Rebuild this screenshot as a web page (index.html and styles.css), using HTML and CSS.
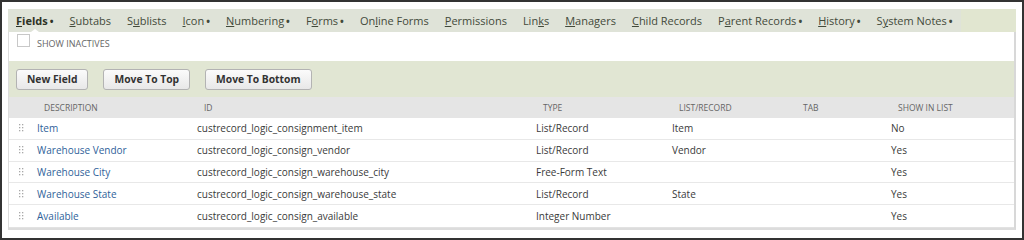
FILE: index.html
```html
<!DOCTYPE html>
<html>
<head>
<meta charset="utf-8">
<link rel="stylesheet" href="styles.css">
</head>
<body>
<div class="frame">
  <div class="panel">
    <div class="tabbar">
      <ul class="tabs">
        <li class="tab selected"><span><u>F</u>ields</span><span class="dot">•</span></li>
        <li class="tab"><span><u>S</u>ubtabs</span></li>
        <li class="tab"><span>S<u>u</u>blists</span></li>
        <li class="tab"><span><u>I</u>con</span><span class="dot">•</span></li>
        <li class="tab"><span><u>N</u>umbering</span><span class="dot">•</span></li>
        <li class="tab"><span>F<u>o</u>rms</span><span class="dot">•</span></li>
        <li class="tab"><span>On<u>l</u>ine Forms</span></li>
        <li class="tab"><span><u>P</u>ermissions</span></li>
        <li class="tab"><span>Lin<u>k</u>s</span></li>
        <li class="tab"><span><u>M</u>anagers</span></li>
        <li class="tab"><span><u>C</u>hild Records</span></li>
        <li class="tab"><span>P<u>a</u>rent Records</span><span class="dot">•</span></li>
        <li class="tab"><span><u>H</u>istory</span><span class="dot">•</span></li>
        <li class="tab"><span>S<u>y</u>stem Notes</span><span class="dot">•</span></li>
      </ul>
    </div>
    <div class="content">
      <div class="inactives">
        <span class="checkbox"></span>
        <span class="inactives-label">SHOW INACTIVES</span>
      </div>
      <div class="buttonbar">
        <button class="btn">New Field</button>
        <button class="btn">Move To Top</button>
        <button class="btn">Move To Bottom</button>
      </div>
      <div class="table">
        <div class="row head">
          <div class="cell"></div>
          <div class="cell">DESCRIPTION</div>
          <div class="cell">ID</div>
          <div class="cell">TYPE</div>
          <div class="cell">LIST/RECORD</div>
          <div class="cell">TAB</div>
          <div class="cell">SHOW IN LIST</div>
        </div>
        <div class="row">
          <div class="cell handle"><svg width="5" height="8" viewBox="0 0 5 8"><g fill="#a8a8a8"><rect x="0" y="0" width="1.3" height="1.3"/><rect x="3" y="0" width="1.3" height="1.3"/><rect x="0" y="3" width="1.3" height="1.3"/><rect x="3" y="3" width="1.3" height="1.3"/><rect x="0" y="6" width="1.3" height="1.3"/><rect x="3" y="6" width="1.3" height="1.3"/></g></svg></div>
          <div class="cell link">Item</div>
          <div class="cell">custrecord_logic_consignment_item</div>
          <div class="cell">List/Record</div>
          <div class="cell">Item</div>
          <div class="cell"></div>
          <div class="cell">No</div>
        </div>
        <div class="row">
          <div class="cell handle"><svg width="5" height="8" viewBox="0 0 5 8"><g fill="#a8a8a8"><rect x="0" y="0" width="1.3" height="1.3"/><rect x="3" y="0" width="1.3" height="1.3"/><rect x="0" y="3" width="1.3" height="1.3"/><rect x="3" y="3" width="1.3" height="1.3"/><rect x="0" y="6" width="1.3" height="1.3"/><rect x="3" y="6" width="1.3" height="1.3"/></g></svg></div>
          <div class="cell link">Warehouse Vendor</div>
          <div class="cell">custrecord_logic_consign_vendor</div>
          <div class="cell">List/Record</div>
          <div class="cell">Vendor</div>
          <div class="cell"></div>
          <div class="cell">Yes</div>
        </div>
        <div class="row">
          <div class="cell handle"><svg width="5" height="8" viewBox="0 0 5 8"><g fill="#a8a8a8"><rect x="0" y="0" width="1.3" height="1.3"/><rect x="3" y="0" width="1.3" height="1.3"/><rect x="0" y="3" width="1.3" height="1.3"/><rect x="3" y="3" width="1.3" height="1.3"/><rect x="0" y="6" width="1.3" height="1.3"/><rect x="3" y="6" width="1.3" height="1.3"/></g></svg></div>
          <div class="cell link">Warehouse City</div>
          <div class="cell">custrecord_logic_consign_warehouse_city</div>
          <div class="cell">Free-Form Text</div>
          <div class="cell"></div>
          <div class="cell"></div>
          <div class="cell">Yes</div>
        </div>
        <div class="row">
          <div class="cell handle"><svg width="5" height="8" viewBox="0 0 5 8"><g fill="#a8a8a8"><rect x="0" y="0" width="1.3" height="1.3"/><rect x="3" y="0" width="1.3" height="1.3"/><rect x="0" y="3" width="1.3" height="1.3"/><rect x="3" y="3" width="1.3" height="1.3"/><rect x="0" y="6" width="1.3" height="1.3"/><rect x="3" y="6" width="1.3" height="1.3"/></g></svg></div>
          <div class="cell link">Warehouse State</div>
          <div class="cell">custrecord_logic_consign_warehouse_state</div>
          <div class="cell">List/Record</div>
          <div class="cell">State</div>
          <div class="cell"></div>
          <div class="cell">Yes</div>
        </div>
        <div class="row last">
          <div class="cell handle"><svg width="5" height="8" viewBox="0 0 5 8"><g fill="#a8a8a8"><rect x="0" y="0" width="1.3" height="1.3"/><rect x="3" y="0" width="1.3" height="1.3"/><rect x="0" y="3" width="1.3" height="1.3"/><rect x="3" y="3" width="1.3" height="1.3"/><rect x="0" y="6" width="1.3" height="1.3"/><rect x="3" y="6" width="1.3" height="1.3"/></g></svg></div>
          <div class="cell link">Available</div>
          <div class="cell">custrecord_logic_consign_available</div>
          <div class="cell">Integer Number</div>
          <div class="cell"></div>
          <div class="cell"></div>
          <div class="cell">Yes</div>
        </div>
      </div>
    </div>
  </div>
</div>
</body>
</html>
```

FILE: styles.css
```css
* { box-sizing: border-box; }
html, body { margin: 0; padding: 0; background: #fff; }
body { font-family: "Open Sans", "Liberation Sans", sans-serif; color: #333; }

.frame {
  width: 1024px;
  height: 240px;
  border: 2px solid #333;
  padding: 7px 6px 0 6px;
  overflow: hidden;
}

.panel { width: 1008px; }

.tabbar {
  height: 23px;
  background: #e1e6d0;
  display: flex;
}
.tabs {
  list-style: none;
  margin: 0;
  padding: 0;
  display: flex;
  background: #dfe3d8;
  height: 23px;
}
.tab {
  position: relative;
  padding: 0 8px;
  font-size: 11px;
  line-height: 23px;
  color: #434a3a;
  white-space: nowrap;
}
.tab u { text-decoration-thickness: 1px; text-underline-offset: 1px; }
.tab.selected { font-weight: 700; color: #2e3326; }
.tab.selected::after {
  content: "";
  position: absolute;
  left: 50%;
  bottom: 0;
  margin-left: -4px;
  border-left: 4px solid transparent;
  border-right: 4px solid transparent;
  border-bottom: 3px solid #fff;
}
.dot { font-size: 10px; margin-left: 2px; font-weight: 700; }

.content {
  border-left: 1px solid #dcdcdc;
  border-right: 2px solid #d8d8d8;
  border-bottom: 2px solid #dcdcdc;
}

.inactives {
  height: 29px;
  display: flex;
  align-items: flex-start;
  padding: 2px 0 0 8px;
}
.checkbox {
  width: 13px;
  height: 13px;
  border: 1px solid #c8c8c8;
  background: #fff;
  display: inline-block;
}
.inactives-label {
  font-size: 9px;
  color: #666;
  margin-left: 7px;
  margin-top: 4px;
  line-height: 12px;
}

.buttonbar {
  height: 36px;
  background: #e1e6d3;
  display: flex;
  align-items: center;
  gap: 15px;
  padding-left: 7px;
}
.btn {
  height: 21px;
  padding: 0 10px;
  font-family: "Open Sans", "Liberation Sans", sans-serif;
  font-weight: 700;
  font-size: 10.3px;
  color: #333;
  background: linear-gradient(#fbfbfb, #e8e8e8);
  border: 1px solid #b3b3b3;
  border-radius: 3px;
}

.table { border-bottom: 1px solid #e2e2e2; }
.row {
  display: grid;
  grid-template-columns: 21px 160px 339px 136px 124px 95px 1fr;
  height: 21.8px;
  align-items: center;
  border-bottom: 1px solid #e8e8e8;
  font-size: 10px;
  color: #3a3a3a;
}
.row.last { border-bottom: none; }
.row .cell { padding-left: 7px; white-space: nowrap; }
.row .cell.handle { padding-left: 10px; display: flex; align-items: center; }
.row.head {
  height: 21px;
  background: #e5e5e5;
  border-bottom: none;
  font-size: 8.5px;
  color: #666;
}
.row.head .cell { padding-left: 14px; }
.link { color: #2f5f9a; }
```
